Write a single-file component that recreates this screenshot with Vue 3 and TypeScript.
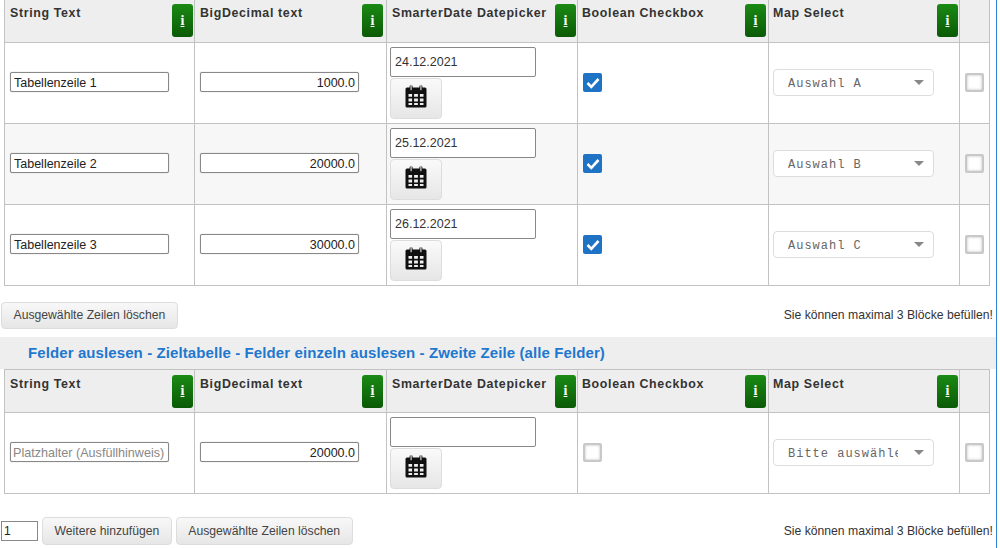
<script setup lang="ts">
interface Row {
  text: string
  placeholder?: string
  num: string
  date: string
  checked: boolean
  sel: string
}
const heads = ['String Text', 'BigDecimal text', 'SmarterDate Datepicker', 'Boolean Checkbox', 'Map Select']
const first: Row[] = [
  { text: 'Tabellenzeile 1', num: '1000.0', date: '24.12.2021', checked: true, sel: 'Auswahl A' },
  { text: 'Tabellenzeile 2', num: '20000.0', date: '25.12.2021', checked: true, sel: 'Auswahl B' },
  { text: 'Tabellenzeile 3', num: '30000.0', date: '26.12.2021', checked: true, sel: 'Auswahl C' },
]
const second: Row[] = [
  { text: '', placeholder: 'Platzhalter (Ausfüllhinweis)', num: '20000.0', date: '', checked: false, sel: 'Bitte auswählen' },
]
const tables = [first, second]
</script>

<template>
  <div class="page">
    <template v-for="(rows, t) in tables" :key="t">
      <div v-if="t === 1" class="band">Felder auslesen - Zieltabelle - Felder einzeln auslesen - Zweite Zeile (alle Felder)</div>
      <table class="grid" :class="{ second: t === 1 }">
        <colgroup>
          <col class="c1" /><col class="c2" /><col class="c3" /><col class="c4" /><col class="c5" /><col class="c6" />
        </colgroup>
        <thead>
          <tr>
            <th v-for="h in heads" :key="h">
              <div class="th-in">
                <span class="th-label">{{ h }}</span>
                <span class="info"><u>i</u></span>
              </div>
            </th>
            <th></th>
          </tr>
        </thead>
        <tbody>
          <tr v-for="(r, i) in rows" :key="i" :class="{ alt: t === 0 && i === 1 }">
            <td class="pad-text"><input class="tinput" type="text" :value="r.text" :placeholder="r.placeholder" /></td>
            <td class="pad-text"><input class="tinput num" type="text" :value="r.num" /></td>
            <td class="date-cell">
              <input class="dinput" type="text" :value="r.date" />
              <button class="cal" type="button" aria-label="Kalender">
                <svg width="24" height="24" viewBox="0 0 24 24">
                  <path fill="#111" fill-rule="evenodd" d="M3 3.5h2.6V2.4a1.5 1.5 0 0 1 3 0v1.1h6.8V2.4a1.5 1.5 0 0 1 3 0v1.1H21a1.5 1.5 0 0 1 1.5 1.5v17a1.5 1.5 0 0 1-1.5 1.5H3A1.5 1.5 0 0 1 1.500 22V5A1.500 1.500 0 0 1 3 3.500ZM4.500 10v2.800h3.600V10Zm5.600 0v2.800h3.800V10Zm5.800 0v2.800h3.600V10ZM4.500 14.600v2.800h3.600v-2.800Zm5.600 0v2.800h3.800v-2.800Zm5.800 0v2.800h3.600v-2.800ZM4.500 19v2h3.600v-2Zm5.600 0v2h3.800v-2Zm5.800 0v2h3.600v-2Z" />
                  <rect x="6.500" y="0.800" width="1.200" height="5.500" rx="0.600" fill="#ddd" />
                  <rect x="16.300" y="0.800" width="1.200" height="5.500" rx="0.600" fill="#ddd" />
                </svg>
              </button>
            </td>
            <td class="check-cell">
              <span class="box" :class="{ on: r.checked }">
                <svg v-if="r.checked" width="14" height="12" viewBox="0 0 14 12"><path d="M1.500 6l3.800 3.800L12.500 2" fill="none" stroke="#fff" stroke-width="2.600" /></svg>
              </span>
            </td>
            <td class="sel-cell">
              <div class="sel"><span class="sel-text">{{ r.sel }}</span><span class="caret"></span></div>
            </td>
            <td class="last-cell"><span class="box"></span></td>
          </tr>
        </tbody>
      </table>
      <div class="foot" :class="{ foot2: t === 1 }">
        <div class="actions">
          <input v-if="t === 1" class="count" type="text" value="1" />
          <button v-if="t === 1" class="btn add" type="button">Weitere hinzufügen</button>
          <button class="btn" type="button">Ausgewählte Zeilen löschen</button>
        </div>
        <span class="limit">Sie können maximal 3 Blöcke befüllen!</span>
      </div>
    </template>
  </div>
</template>

<style>
html, body { margin: 0; background: #fff; overflow: hidden; }
</style>

<style scoped>
.page {
  width: 996px;
  height: 548px;
  border-right: 1px solid #2f86d6;
  font-family: "Liberation Sans", Arial, sans-serif;
  font-size: 12px;
  color: #333;
  box-sizing: content-box;
  overflow: hidden;
}
.grid {
  margin-left: 4px;
  width: 985px;
  border-collapse: collapse;
  table-layout: fixed;
}
.c1 { width: 190px; }
.c2 { width: 192px; }
.c3 { width: 191px; }
.c4 { width: 191px; }
.c5 { width: 191px; }
.c6 { width: 30px; }
th {
  height: 42px;
  padding: 0;
  background: #eee;
  border: 1px solid #c2c2c2;
  border-top: 0;
  box-sizing: border-box;
  vertical-align: top;
  text-align: left;
}
.second th { border-top: 1px solid #c2c2c2; height: 43px; }
.th-in {
  display: flex;
  justify-content: space-between;
  align-items: flex-start;
  padding: 6px 1px 0 5px;
}
th:nth-child(2) .th-in { padding-right: 3px; }
th:nth-child(4) .th-in { padding-right: 2px; padding-left: 4px; }
th:nth-child(5) .th-in { padding-left: 4px; }
.second .th-in { padding-top: 7px; }
.th-label {
  font-weight: 700;
  font-size: 12.4px;
  letter-spacing: 0.65px;
  line-height: 14px;
  color: #333;
}
.info {
  width: 21px;
  height: 33px;
  margin-top: -2px;
  border-radius: 3px;
  background: linear-gradient(#1a8a14, #0b5a06);
  color: #fff;
  font-family: "Liberation Serif", serif;
  font-weight: 700;
  font-size: 14px;
  display: flex;
  align-items: center;
  justify-content: center;
}
td {
  height: 81px;
  padding: 0;
  border: 1px solid #c2c2c2;
  box-sizing: border-box;
  vertical-align: middle;
}
.alt td { background: #f7f7f7; }
.pad-text { padding: 0 0 1px 5px; }
.tinput {
  display: block;
  width: 159px;
  height: 20px;
  box-sizing: border-box;
  border: 1px solid #888;
  box-shadow: 0 0 1px #999;
  border-radius: 2px;
  padding: 1px 3px 0;
  margin: 0;
  font: 12.5px "Liberation Sans", Arial, sans-serif;
  color: #222;
  background: #fff;
  outline: none;
}
.tinput::placeholder { color: #888; opacity: 1; }
.pad-text .tinput:placeholder-shown { padding: 1px 2px 0; font-size: 12.6px; }
.num { text-align: right; }
.date-cell { padding-left: 3px; }
.dinput {
  display: block;
  width: 146px;
  height: 30px;
  box-sizing: border-box;
  border: 1px solid #888;
  border-radius: 2px;
  padding: 0 4px;
  margin: 0;
  font: 12.5px "Liberation Sans", Arial, sans-serif;
  color: #333;
  background: #fff;
}
.cal {
  display: flex;
  align-items: center;
  justify-content: center;
  width: 52px;
  height: 41px;
  padding: 0 0 4px;
  margin: 1px 0 0;
  border: 1px solid #ddd;
  border-radius: 4px;
  background: linear-gradient(#fafafa, #e6e6e6);
}
.check-cell { padding-left: 5px; }
.box {
  display: flex;
  align-items: center;
  justify-content: center;
  width: 19px;
  height: 19px;
  box-sizing: border-box;
  border: 2px solid #c8c8c8;
  border-radius: 2px;
  background: #fff;
  box-shadow: inset 0 0 3px #bbb;
}
.box.on {
  background: #1e73c4;
  border-color: #1e73c4;
  box-shadow: none;
}
.sel-cell { padding-left: 4px; }
.sel {
  display: flex;
  align-items: center;
  width: 161px;
  height: 27px;
  box-sizing: border-box;
  border: 1px solid #ddd;
  border-radius: 4px;
  background: #fff;
  padding: 2px 9px 0 14px;
  font-family: "Liberation Mono", monospace;
  letter-spacing: 1px;
  color: #666;
}
.sel-text {
  width: 110px;
  overflow: hidden;
  white-space: nowrap;
}
.caret {
  margin: -2px 0 0 auto;
  width: 0;
  height: 0;
  border-left: 5px solid transparent;
  border-right: 5px solid transparent;
  border-top: 5px solid #888;
}
.last-cell { padding-left: 5px; }
.foot {
  display: flex;
  justify-content: space-between;
  align-items: center;
  height: 27px;
  margin-top: 16px;
  margin-bottom: 8px;
  padding: 0 3px 0 1px;
}
.foot2 { height: 28px; margin-top: 23px; }
.actions { display: flex; align-items: center; gap: 4px; }
.btn {
  height: 27px;
  padding: 0 11.5px;
  border: 1px solid #ddd;
  border-radius: 4px;
  background: linear-gradient(#f8f8f8, #e6e6e6);
  font: 12.2px "Liberation Sans", Arial, sans-serif;
  color: #444;
}
.foot2 .btn { height: 28px; }
.count {
  width: 37px;
  height: 20px;
  box-sizing: border-box;
  border: 1px solid #888;
  padding: 0 2px;
  margin: 0;
  font: 12px "Liberation Sans", Arial, sans-serif;
  color: #222;
}
.limit { font-size: 12.2px; color: #333; }
.band {
  height: 32px;
  padding-left: 28px;
  background: #eee;
  color: #1e78cf;
  font-weight: 700;
  font-size: 15px;
  letter-spacing: 0.1px;
  line-height: 32px;
  white-space: nowrap;
}
</style>
